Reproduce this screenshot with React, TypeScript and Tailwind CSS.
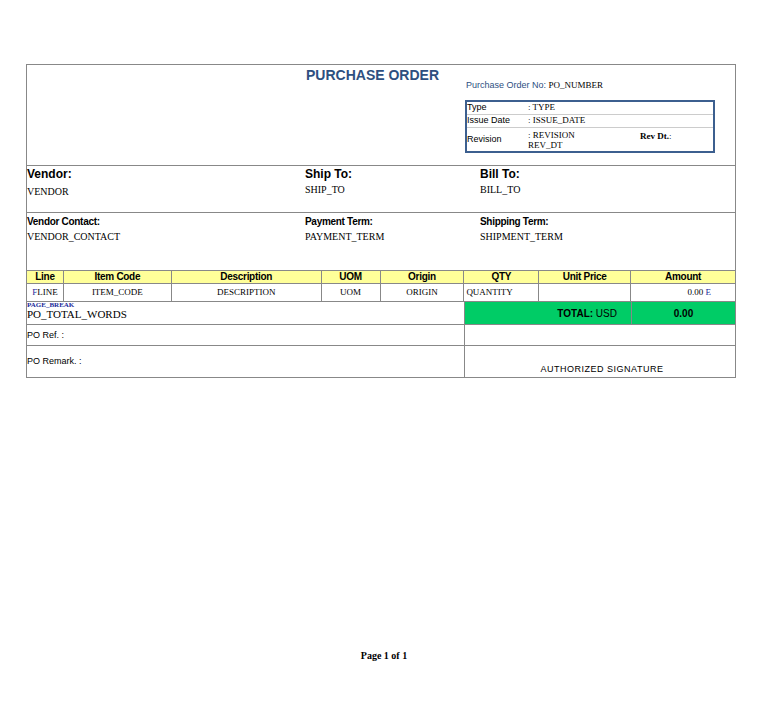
export default function App() {
  const sans = { fontFamily: '"Liberation Sans", Arial, sans-serif' };
  const serif = { fontFamily: '"Liberation Serif", "Times New Roman", serif' };
  const cols = [
    ["Line", 36],
    ["Item Code", 108],
    ["Description", 150],
    ["UOM", 59],
    ["Origin", 84],
    ["QTY", 75],
    ["Unit Price", 92],
    ["Amount", 105],
  ] as const;
  return (
    <div className="w-[768px] h-[703px] bg-white relative text-black" style={sans}>
      <div className="absolute left-[26px] top-[64px] w-[710px] border border-[#888] flex flex-col">
        {/* header */}
        <div className="h-[101px] relative border-b border-[#888]">
          <div className="absolute left-[279px] top-[0px] text-[14px] font-bold text-[#2e4f7f]">PURCHASE ORDER</div>
          <div className="absolute left-[439px] top-[14px] text-[9px] text-[#2e4f7f]">
            Purchase Order No: <span className="text-black" style={serif}>PO_NUMBER</span>
          </div>
          <div className="absolute left-[438px] top-[35px] w-[250px] h-[53px] border-2 border-[#3c5f8f] text-[9px] flex flex-col">
            <div className="flex h-[13px] items-center border-b border-[#ccc]"><span className="w-[61px]">Type</span><span style={serif}>: TYPE</span></div>
            <div className="flex h-[13px] items-center border-b border-[#ccc]"><span className="w-[61px]">Issue Date</span><span style={serif}>: ISSUE_DATE</span></div>
            <div className="flex flex-1 items-center">
              <span className="w-[61px]">Revision</span>
              <span className="leading-[10px] w-[112px]" style={serif}>: REVISION<br />REV_DT</span>
              <span className="font-bold self-start mt-[2px]" style={serif}>Rev Dt.<span className="font-normal">:</span></span>
            </div>
          </div>
        </div>
        {/* vendor row */}
        <div className="h-[47px] flex border-b border-[#888] pt-[1px]">
          <div className="w-[278px]"><div className="text-[12px] font-bold leading-[14px]">Vendor:</div><div className="text-[10px] mt-[3px]" style={serif}>VENDOR</div></div>
          <div className="w-[175px]"><div className="text-[12px] font-bold leading-[14px]">Ship To:</div><div className="text-[10px] mt-[1px]" style={serif}>SHIP_TO</div></div>
          <div><div className="text-[12px] font-bold leading-[14px]">Bill To:</div><div className="text-[10px] mt-[1px]" style={serif}>BILL_TO</div></div>
        </div>
        {/* contact row */}
        <div className="h-[57px] flex pt-[1px]">
          <div className="w-[278px]"><div className="text-[10px] font-bold tracking-[-0.3px]">Vendor Contact:</div><div className="text-[10px]" style={serif}>VENDOR_CONTACT</div></div>
          <div className="w-[175px]"><div className="text-[10px] font-bold tracking-[-0.3px]">Payment Term:</div><div className="text-[10px]" style={serif}>PAYMENT_TERM</div></div>
          <div><div className="text-[10px] font-bold tracking-[-0.3px]">Shipping Term:</div><div className="text-[10px]" style={serif}>SHIPMENT_TERM</div></div>
        </div>
        {/* table header */}
        <div className="flex h-[14px] bg-[#ffff99] border-y border-[#888]">
          {cols.map(([n, w], i) => (
            <div key={n} style={{ width: w }} className={`text-[10px] font-bold text-center leading-[12px] tracking-[-0.3px] ${i ? "border-l border-[#888]" : ""}`}>{n}</div>
          ))}
        </div>
        <div className="flex h-[18px] border-b border-[#888] text-[9px] items-stretch" style={serif}>
          {["FLINE", "ITEM_CODE", "DESCRIPTION", "UOM", "ORIGIN", "QUANTITY", "", "0.00"].map((t, i) => (
            <div key={i} style={{ width: cols[i][1] }} className={`flex items-center ${i === 5 ? "justify-start pl-[2px]" : i === 7 ? "justify-end pr-[24px]" : "justify-center"} ${i ? "border-l border-[#888]" : ""}`}>
              {i === 0 ? <span><span className="text-[#1a2a9a]">F</span>LINE</span> : i === 7 ? <span>0.00 <span className="text-[#1a2a9a]">E</span></span> : t}
            </div>
          ))}
        </div>
        {/* total */}
        <div className="flex h-[23px] border-b border-[#888]">
          <div className="w-[437px] leading-none">
            <div className="text-[7px] text-[#1a2a9a] font-bold" style={serif}>PAGE_BREAK</div>
            <div className="text-[11px]" style={serif}>PO_TOTAL_WORDS</div>
          </div>
          <div className="w-[167px] bg-[#00cc66] border-l border-[#888] flex items-center justify-end pr-[14px] text-[10px]"><b>TOTAL:</b>&nbsp;USD</div>
          <div className="flex-1 bg-[#00cc66] border-l border-[#888] flex items-center justify-center text-[10px] font-bold">0.00</div>
        </div>
        <div className="flex h-[21px] border-b border-[#888]">
          <div className="w-[437px] text-[9px] flex items-end pb-[3px]">PO Ref. :</div>
          <div className="flex-1 border-l border-[#888]"></div>
        </div>
        <div className="flex h-[31px]">
          <div className="w-[437px] text-[9px] pt-[9px]">PO Remark. :</div>
          <div className="flex-1 border-l border-[#888] flex items-end justify-center pb-[1px] text-[9px] tracking-[0.5px] pl-[4px]">AUTHORIZED SIGNATURE</div>
        </div>
      </div>
      <div className="absolute left-0 w-full top-[648px] text-center text-[10px] font-bold" style={serif}>Page 1 of 1</div>
    </div>
  );
}
